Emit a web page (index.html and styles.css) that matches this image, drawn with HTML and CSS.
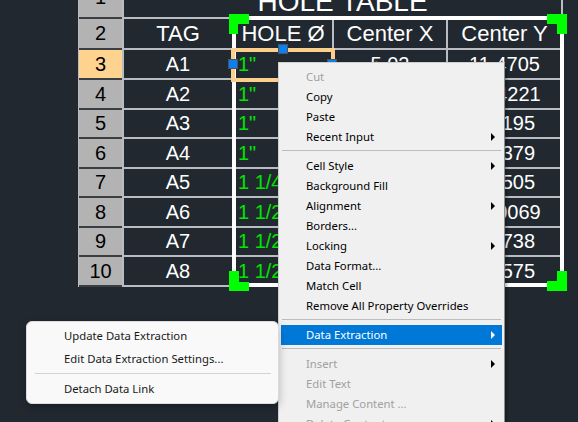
FILE: index.html
```html
<!DOCTYPE html>
<html>
<head>
<meta charset="utf-8">
<link rel="stylesheet" href="styles.css">
</head>
<body>
<div class="canvas">
  <div class="sheet">
    <div class="tbl-wrap">
      <div class="tbl">
        <div class="rh rh-top">1</div><div class="title">HOLE TABLE</div>
        <div class="rh">2</div><div class="hd">TAG</div><div class="hd">HOLE Ø</div><div class="hd">Center X</div><div class="hd">Center Y</div>
        <div class="rh rh-sel">3</div><div class="c">A1</div><div class="c g">1"</div><div class="c">5.02</div><div class="c">11.4705</div>
        <div class="rh">4</div><div class="c">A2</div><div class="c g">1"</div><div class="c"></div><div class="c">10.4221</div>
        <div class="rh">5</div><div class="c">A3</div><div class="c g">1"</div><div class="c"></div><div class="c">9.9195</div>
        <div class="rh">6</div><div class="c">A4</div><div class="c g">1"</div><div class="c"></div><div class="c">8.9379</div>
        <div class="rh">7</div><div class="c">A5</div><div class="c g">1 1/4"</div><div class="c"></div><div class="c">7.5505</div>
        <div class="rh">8</div><div class="c">A6</div><div class="c g">1 1/2"</div><div class="c"></div><div class="c">10.0069</div>
        <div class="rh">9</div><div class="c">A7</div><div class="c g">1 1/2"</div><div class="c"></div><div class="c">6.0738</div>
        <div class="rh">10</div><div class="c">A8</div><div class="c g">1 1/2"</div><div class="c"></div><div class="c">5.9575</div>
      </div>
      <div class="sel-frame"></div>
      <div class="cell-frame"></div>
      <div class="corner corner-tl"></div>
      <div class="corner corner-tr"></div>
      <div class="corner corner-bl"></div>
      <div class="corner corner-br"></div>
      <div class="grip grip-top"></div>
      <div class="grip grip-left"></div>
      <div class="grip grip-right"></div>
    </div>
  </div>

  <div class="menu">
    <div class="mi dis">Cut</div>
    <div class="mi">Copy</div>
    <div class="mi">Paste</div>
    <div class="mi sub">Recent Input</div>
    <div class="msep"></div>
    <div class="mi sub">Cell Style</div>
    <div class="mi">Background Fill</div>
    <div class="mi sub">Alignment</div>
    <div class="mi">Borders...</div>
    <div class="mi sub">Locking</div>
    <div class="mi">Data Format...</div>
    <div class="mi">Match Cell</div>
    <div class="mi">Remove All Property Overrides</div>
    <div class="msep"></div>
    <div class="mi sub hot">Data Extraction</div>
    <div class="msep"></div>
    <div class="mi sub dis">Insert</div>
    <div class="mi dis">Edit Text</div>
    <div class="mi dis">Manage Content ...</div>
    <div class="mi sub dis">Delete Content</div>
  </div>

  <div class="submenu">
    <div class="si">Update Data Extraction</div>
    <div class="si">Edit Data Extraction Settings...</div>
    <div class="ssep"></div>
    <div class="si">Detach Data Link</div>
  </div>
</div>
</body>
</html>
```
FILE: styles.css
```css
html, body {
  margin: 0;
  padding: 0;
}
body {
  background: #212830;
  font-family: "Liberation Sans", Arial, sans-serif;
}
.canvas {
  position: relative;
  width: 578px;
  height: 422px;
  overflow: hidden;
  background: #212830;
}
.sheet {
  padding-left: 78px;
  margin-top: -14px;
}
.tbl-wrap {
  position: relative;
  display: inline-block;
}
.tbl {
  display: grid;
  grid-template-columns: 43px 108px 98px 112px 113px;
  grid-template-rows: 31px 29px 28px 28px 27px 28px 27px 28px 27px 28px;
  gap: 2px;
  padding: 0 2px 2px 1px;
  background: #b9bcc0;
}
.tbl > div {
  background: #212830;
  color: #ffffff;
  display: flex;
  align-items: center;
  justify-content: center;
  font-size: 20px;
  white-space: nowrap;
  overflow: hidden;
}
.tbl > .rh {
  background: #b3b3b3;
  color: #000;
  box-shadow: 0 2px 0 #3a3d42;
}
.tbl > .rh-top {
  padding-bottom: 9px;
  box-sizing: border-box;
}
.tbl > .rh-sel {
  background: #fed28f;
}
.tbl > .title {
  grid-column: 2 / 6;
  font-size: 28px;
}
.tbl > .hd {
  font-size: 22px;
}
.tbl > .g {
  color: #00e600;
  justify-content: flex-start;
  padding-left: 4px;
}
.sel-frame {
  position: absolute;
  left: 154px;
  top: 30px;
  width: 332px;
  height: 271px;
  box-sizing: border-box;
  border: 4px solid #ffffff;
}
.cell-frame {
  position: absolute;
  left: 153px;
  top: 62px;
  width: 104px;
  height: 34px;
  box-sizing: border-box;
  border: 4px solid #fbcf8c;
}
.corner {
  position: absolute;
  width: 20px;
  height: 20px;
  box-sizing: border-box;
  border: 0 solid #00ff00;
}
.corner-tl { left: 151px; top: 28px; border-top-width: 10px; border-left-width: 9px; }
.corner-tr { left: 469px; top: 28px; border-top-width: 10px; border-right-width: 10px; }
.corner-bl { left: 151px; top: 285px; border-bottom-width: 9px; border-left-width: 10px; }
.corner-br { left: 469px; top: 285px; border-bottom-width: 10px; border-right-width: 10px; }
.grip {
  position: absolute;
  width: 10px;
  height: 10px;
  box-sizing: border-box;
  background: #0a80f5;
  border: 1px solid #4d5258;
}
.grip-top { left: 200px; top: 58px; }
.grip-left { left: 150px; top: 73px; }
.grip-right { left: 249px; top: 73px; }

.menu {
  position: absolute;
  left: 278px;
  top: 62px;
  width: 227px;
  box-sizing: border-box;
  background: #f0f0f0;
  border: 1px solid #cfcfcf;
  border-right-color: #8e8e8e;
  padding: 4px 2px 4px 2px;
  font-family: "Noto Sans", "Open Sans", sans-serif;
  font-size: 11.3px;
  color: #000;
  box-shadow: 2px 2px 3px rgba(0,0,0,0.3);
}
.mi {
  position: relative;
  height: 20px;
  line-height: 20px;
  padding-left: 25px;
  white-space: nowrap;
}
.mi.dis {
  color: #a0a0a0;
}
.mi.sub::after {
  content: "";
  position: absolute;
  right: 7px;
  top: 6px;
  border-style: solid;
  border-width: 4px 0 4px 4px;
  border-color: transparent transparent transparent #000;
}
.mi.hot {
  background: #0078d7;
  color: #fff;
}
.mi.hot::after {
  border-left-color: #fff;
}
.msep {
  height: 1px;
  background: #bcbcbc;
  margin: 3px 1px 5px 1px;
}

.submenu {
  position: absolute;
  left: 26px;
  top: 321px;
  width: 253px;
  box-sizing: border-box;
  background: #f9f9f9;
  border: 1px solid #dcdcdc;
  border-radius: 6px;
  padding: 2px 0 3px 0;
  font-family: "Noto Sans", "Open Sans", sans-serif;
  font-size: 11.3px;
  color: #1a1a1a;
  box-shadow: 0 3px 8px rgba(0,0,0,0.25);
}
.si {
  height: 23px;
  line-height: 23px;
  padding-left: 37px;
  white-space: nowrap;
}
.ssep {
  height: 1px;
  background: #d3d3d3;
  margin: 3px 7px 3px 8px;
}
```
